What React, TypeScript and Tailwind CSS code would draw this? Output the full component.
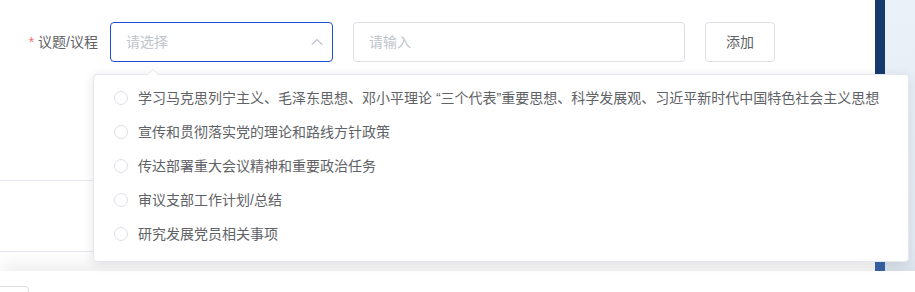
import { ChevronUp } from "lucide-react";

const topics = [
  "学习马克思列宁主义、毛泽东思想、邓小平理论 “三个代表”重要思想、科学发展观、习近平新时代中国特色社会主义思想",
  "宣传和贯彻落实党的理论和路线方针政策",
  "传达部署重大会议精神和重要政治任务",
  "审议支部工作计划/总结",
  "研究发展党员相关事项",
  "",
];

const font = { fontFamily: '"Liberation Sans", "Noto Sans CJK SC", sans-serif' };

export default function App() {
  return (
    <div className="relative flex h-[292px] w-[915px] flex-col overflow-hidden bg-white text-sm text-[#606266]" style={font}>
      <div className="flex h-[271px] shrink-0">
        <main className="flex-1 bg-white">
          <div className="flex items-center pt-[22px]">
            <label className="w-[110px] shrink-0 pr-3 text-right leading-10">
              <span className="mr-1 text-[#f56c6c]">*</span>
              议题/议程
            </label>
            <div className="flex h-10 w-[223px] items-center justify-between rounded border border-[#1d4fd6] pl-[15px] pr-[5px] text-[#c0c4cc]">
              <span>请选择</span>
              <ChevronUp size={20} strokeWidth={1.3} />
            </div>
            <div className="ml-5 flex h-10 w-[332px] items-center rounded border border-[#dcdfe6] px-[15px] text-[#c0c4cc]">
              请输入
            </div>
            <button
              type="button"
              className="ml-5 h-10 w-[70px] rounded border border-[#dcdfe6] bg-white text-[#606266]"
            >
              添加
            </button>
          </div>
          <div className="mt-[118px] h-[72px] border-y border-[#e4e7ed]" />
        </main>
        <div className="flex w-[10px] flex-col">
          <div className="flex-1 bg-[#173a6e]" />
          <div className="h-[9px] bg-[#3a66aa]" />
        </div>
        <div className="w-[30px] bg-gradient-to-b from-[#ebf1f9] to-[#e3eaf3]" />
      </div>

      <footer className="relative flex-1 bg-white shadow-[0_-6px_20px_rgba(0,0,0,0.08)]">
        <div className="ml-[-10px] mt-[15px] h-8 w-[39px] rounded border border-[#dcdfe6]" />
      </footer>

      {/* dropdown of the select */}
      <div className="absolute left-[93px] top-[74px] z-10 h-[188px] w-[816px] rounded border border-[#e4e7ed] bg-white shadow-[0_2px_12px_rgba(0,0,0,0.1)]">
        <div className="absolute -top-[6px] left-[53px] h-0 w-0 border-x-[6px] border-b-[6px] border-x-transparent border-b-[#e4e7ed]" />
        <div className="absolute -top-[5px] left-[53px] h-0 w-0 border-x-[6px] border-b-[6px] border-x-transparent border-b-white" />
        <ul className="h-full overflow-hidden py-[6px]">
          {topics.map((topic, i) => (
            <li key={i} className="flex h-[34px] items-center gap-[10px] whitespace-nowrap pl-[20px]">
              <span className="h-[14px] w-[14px] shrink-0 rounded-full border border-[#dcdfe6] bg-white" />
              {topic && <span>{topic}</span>}
            </li>
          ))}
        </ul>
      </div>
    </div>
  );
}
